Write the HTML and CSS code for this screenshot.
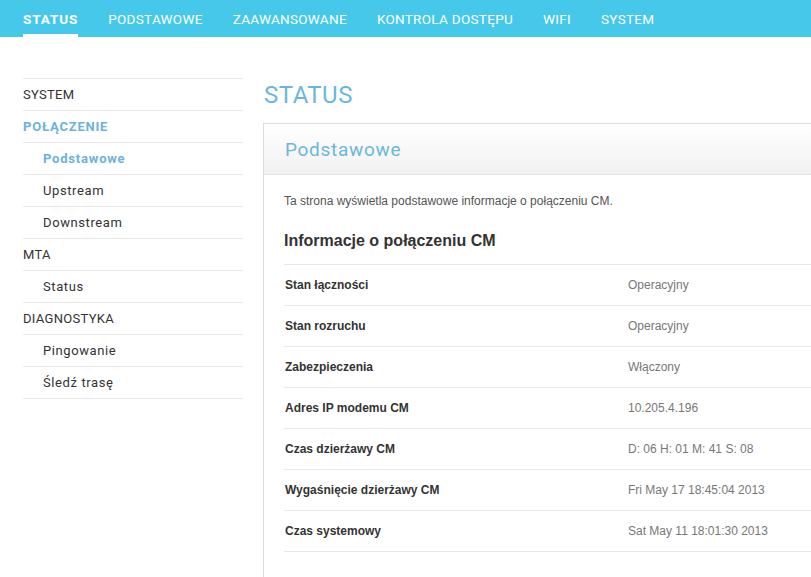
FILE: index.html
```html
<!DOCTYPE html>
<html lang="pl">

<head>
    <meta charset="UTF-8">
    <meta name="viewport" content="width=device-width, initial-scale=1.0">
    <title>Status - Podstawowe</title>
    <link rel="stylesheet" href="styles.css">
</head>

<body>
    <nav class="top-nav">
        <a href="#" class="nav-item active">Status</a>
        <a href="#" class="nav-item">Podstawowe</a>
        <a href="#" class="nav-item">Zaawansowane</a>
        <a href="#" class="nav-item">Kontrola dostępu</a>
        <a href="#" class="nav-item">WiFi</a>
        <a href="#" class="nav-item">System</a>
    </nav>

    <div class="page">
        <aside class="side-menu">
            <a href="#" class="menu-item">SYSTEM</a>
            <a href="#" class="menu-item selected">POŁĄCZENIE</a>
            <a href="#" class="menu-item sub selected">Podstawowe</a>
            <a href="#" class="menu-item sub">Upstream</a>
            <a href="#" class="menu-item sub">Downstream</a>
            <a href="#" class="menu-item">MTA</a>
            <a href="#" class="menu-item sub">Status</a>
            <a href="#" class="menu-item">DIAGNOSTYKA</a>
            <a href="#" class="menu-item sub">Pingowanie</a>
            <a href="#" class="menu-item sub">Śledź trasę</a>
        </aside>

        <main class="content">
            <h1 class="page-title">STATUS</h1>

            <div class="panel">
                <div class="panel-header">
                    <h2>Podstawowe</h2>
                </div>
                <div class="panel-body">
                    <p class="intro">Ta strona wyświetla podstawowe informacje o połączeniu CM.</p>
                    <h3>Informacje o połączeniu CM</h3>

                    <table class="info-table">
                        <tr>
                            <th>Stan łączności</th>
                            <td>Operacyjny</td>
                        </tr>
                        <tr>
                            <th>Stan rozruchu</th>
                            <td>Operacyjny</td>
                        </tr>
                        <tr>
                            <th>Zabezpieczenia</th>
                            <td>Włączony</td>
                        </tr>
                        <tr>
                            <th>Adres IP modemu CM</th>
                            <td>10.205.4.196</td>
                        </tr>
                        <tr>
                            <th>Czas dzierżawy CM</th>
                            <td>D: 06 H: 01 M: 41 S: 08</td>
                        </tr>
                        <tr>
                            <th>Wygaśnięcie dzierżawy CM</th>
                            <td>Fri May 17 18:45:04 2013</td>
                        </tr>
                        <tr>
                            <th>Czas systemowy</th>
                            <td>Sat May 11 18:01:30 2013</td>
                        </tr>
                    </table>
                </div>
            </div>
        </main>
    </div>
</body>

</html>
```

FILE: styles.css
```css
* {
    margin: 0;
    padding: 0;
    box-sizing: border-box;
}

body {
    background-color: #fff;
    color: #333;
    font-family: Roboto, 'Liberation Sans', sans-serif;
    overflow: hidden;
}

a {
    text-decoration: none;
}

/* top navigation */
.top-nav {
    display: flex;
    gap: 30px;
    height: 37px;
    padding-left: 23px;
    background-color: #45c8ea;
}

.nav-item {
    display: flex;
    align-items: center;
    height: 37px;
    border-bottom: 3px solid transparent;
    padding-top: 3px;
    color: #fff;
    font-size: 13.5px;
    text-transform: uppercase;
    letter-spacing: 0.3px;
}

.nav-item.active {
    font-weight: bold;
    border-bottom-color: #fff;
    letter-spacing: 0.9px;
}

/* layout */
.page {
    display: flex;
    padding-top: 41px;
}

.side-menu {
    flex: none;
    width: 220px;
    margin-left: 23px;
    margin-right: 20px;
    border-top: 1px solid #e8e8e8;
}

.menu-item {
    display: flex;
    align-items: center;
    height: 32px;
    border-bottom: 1px solid #e8e8e8;
    color: #333;
    font-size: 13px;
    letter-spacing: 0.3px;
}

.menu-item.sub {
    padding-left: 20px;
    letter-spacing: 0.6px;
}

.menu-item.selected {
    color: #6cb2dc;
    font-weight: bold;
    letter-spacing: 0.8px;
}

.content {
    flex: 1;
    min-width: 0;
}

.page-title {
    color: #6bb7dc;
    font-size: 24px;
    font-weight: normal;
    letter-spacing: 0.5px;
    margin-top: 3px;
    margin-left: 1px;
    height: 42px;
}

.panel {
    border: 1px solid #dcdcdc;
    border-right: none;
    min-height: 460px;
}

.panel-header {
    height: 51px;
    display: flex;
    align-items: center;
    padding-left: 21px;
    background-image: linear-gradient(to bottom, #ffffff 0%, #f1f1f1 100%);
    border-bottom: 1px solid #e2e2e2;
}

.panel-header h2 {
    color: #6bb7dc;
    font-size: 19px;
    font-weight: normal;
    letter-spacing: 0.7px;
}

.panel-body {
    padding: 19px 0 0 20px;
    font-family: 'Liberation Sans', Arial, sans-serif;
}

.intro {
    font-size: 12px;
    color: #555;
    line-height: 14px;
}

.panel-body h3 {
    font-size: 16px;
    color: #333;
    margin-top: 24px;
    margin-bottom: 14px;
}

.info-table {
    width: 100%;
    border-collapse: collapse;
    border-top: 1px solid #e8e8e8;
    font-size: 12px;
}

.info-table tr {
    height: 41px;
    border-bottom: 1px solid #e8e8e8;
}

.info-table th {
    text-align: left;
    width: 344px;
    padding-left: 1px;
    color: #333;
}

.info-table td {
    color: #777;
}
```
